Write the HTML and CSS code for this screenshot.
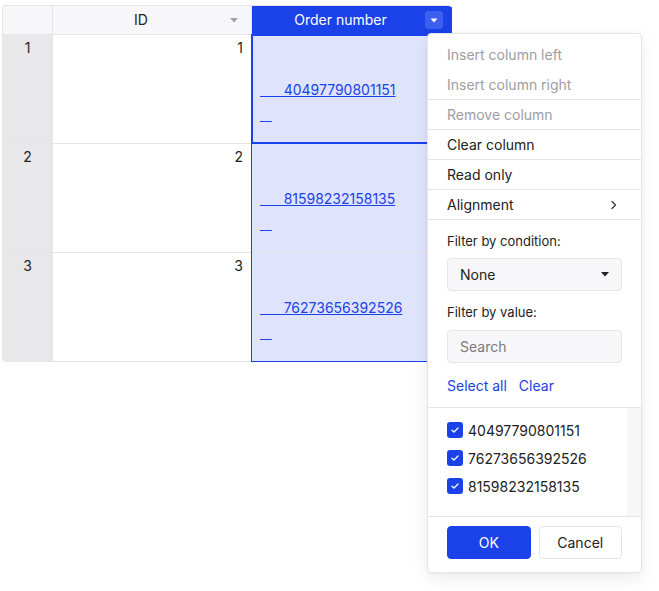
FILE: index.html
```html
<!DOCTYPE html>
<html>
<head>
<meta charset="utf-8">
<link rel="stylesheet" href="styles.css">
</head>
<body>
<div class="grid">
  <div class="cell corner"></div>
  <div class="cell colhead">
    <span class="label">ID</span>
    <span class="dd"><svg width="8" height="5" viewBox="0 0 8 5"><path d="M0 0h8L4 4.5z" fill="#a0a1a7"/></svg></span>
  </div>
  <div class="cell colhead sel">
    <span class="label">Order number</span>
    <span class="dd active"><svg width="8" height="5" viewBox="0 0 8 5"><path d="M0.5 0.5h7L4 4.5z" fill="#fff"/></svg></span>
  </div>

  <div class="cell rowhead">1</div>
  <div class="cell num">1</div>
  <div class="cell ord"><a class="lnk" href="#">
      40497790801151
   </a></div>

  <div class="cell rowhead">2</div>
  <div class="cell num">2</div>
  <div class="cell ord"><a class="lnk" href="#">
      81598232158135
   </a></div>

  <div class="cell rowhead">3</div>
  <div class="cell num">3</div>
  <div class="cell ord"><a class="lnk" href="#">
      76273656392526
   </a></div>

  <div class="area"></div>
  <div class="current"></div>
</div>

<div class="menu">
  <ul class="items">
    <li class="item disabled">Insert column left</li>
    <li class="item disabled sep">Insert column right</li>
    <li class="item disabled sep">Remove column</li>
    <li class="item sep">Clear column</li>
    <li class="item sep">Read only</li>
    <li class="item sep sub">Alignment<svg width="6" height="10" viewBox="0 0 6 10"><path d="M1 1.5l3.5 3.5L1 8.5" fill="none" stroke="#333" stroke-width="1.2" stroke-linecap="round" stroke-linejoin="round"/></svg></li>
  </ul>
  <div class="filters">
    <div class="flabel">Filter by condition:</div>
    <div class="select"><span>None</span><svg width="8" height="5" viewBox="0 0 8 5"><path d="M0 0h8L4 4.5z" fill="#222"/></svg></div>
    <div class="flabel second">Filter by value:</div>
    <div class="search">Search</div>
    <div class="links"><span class="link">Select all</span><span class="link">Clear</span></div>
  </div>
  <div class="list">
    <div class="values">
      <div class="val"><span class="cb"><svg width="8" height="6" viewBox="0 0 8 6"><path d="M1 3.2l2 1.8L7 1" fill="none" stroke="#fff" stroke-width="1.3" stroke-linecap="round" stroke-linejoin="round"/></svg></span>40497790801151</div>
      <div class="val"><span class="cb"><svg width="8" height="6" viewBox="0 0 8 6"><path d="M1 3.2l2 1.8L7 1" fill="none" stroke="#fff" stroke-width="1.3" stroke-linecap="round" stroke-linejoin="round"/></svg></span>76273656392526</div>
      <div class="val"><span class="cb"><svg width="8" height="6" viewBox="0 0 8 6"><path d="M1 3.2l2 1.8L7 1" fill="none" stroke="#fff" stroke-width="1.3" stroke-linecap="round" stroke-linejoin="round"/></svg></span>81598232158135</div>
    </div>
    <div class="track"></div>
  </div>
  <div class="footer">
    <button class="btn ok">OK</button>
    <button class="btn cancel">Cancel</button>
  </div>
</div>
</body>
</html>
```

FILE: styles.css
```css
* { box-sizing: border-box; }
html, body { margin: 0; padding: 0; background: #fff; }
body {
  font-family: Inter, "Noto Sans", "Liberation Sans", sans-serif;
  font-size: 14px;
  color: #222;
  width: 659px;
  height: 591px;
  overflow: hidden;
  position: relative;
}

.grid {
  position: relative;
  margin: 5px 0 0 2px;
  width: 450px;
  display: grid;
  grid-template-columns: 50px 199px 200px;
  grid-template-rows: 29px 109px 109px 109px;
  border-top: 1px solid #e5e5e9;
  border-left: 1px solid #e5e5e9;
  border-radius: 4px;
  overflow: hidden;
}
.cell {
  border-right: 1px solid #e5e5e9;
  border-bottom: 1px solid #e5e5e9;
  background: #fff;
}
.corner, .colhead { background: #f7f7f9; }
.colhead {
  display: flex;
  align-items: center;
  padding: 0 8px;
  gap: 4px;
}
.colhead .label { flex: 1; text-align: center; line-height: 20px; }
.colhead.sel { background: #1a42e8; color: #fff; border-right-color: #1a42e8; border-bottom-color: #1a42e8; }
.dd {
  width: 18px; height: 18px;
  display: flex; align-items: center; justify-content: center;
  border-radius: 3px;
}
.dd.active { background: #3c5ff0; }
.rowhead {
  background: #e8e8eb;
  text-align: center;
  padding-top: 3px;
  line-height: 20px;
}
.num { text-align: right; padding: 3px 8px 0; line-height: 20px; }
.ord {
  background: #dfe4fc;
  display: flex;
  align-items: center;
  padding: 0 8px;
}
.lnk {
  color: #1a42e8;
  white-space: pre;
  line-height: 25px;
  text-decoration: underline;
}
.area {
  position: absolute;
  left: 248px; top: 28px;
  width: 202px; height: 328px;
  border: 1px solid #1a42e8;
  pointer-events: none;
}
.current {
  position: absolute;
  left: 248px; top: 28px;
  width: 202px; height: 110px;
  border: 2px solid #1a42e8;
  pointer-events: none;
}

.menu {
  position: absolute;
  left: 427px; top: 33px;
  width: 215px; height: 540px;
  background: #fff;
  border: 1px solid #e5e5e9;
  border-radius: 4px;
  box-shadow: 0 6px 18px rgba(0,0,0,0.07), 0 1px 4px rgba(0,0,0,0.04);
  display: flex;
  flex-direction: column;
}
.items { list-style: none; margin: 0; padding: 6px 0 0; }
.item {
  height: 30px;
  padding: 0 19px;
  display: flex;
  align-items: center;
  line-height: 20px;
}
.item.sep { border-bottom: 1px solid #e5e5e9; }
.item.disabled { color: #9d9da3; }
.item.sub { justify-content: space-between; padding-right: 24px; }

.filters { padding: 12px 19px 11px; border-bottom: 1px solid #e5e5e9; }
.flabel { font-size: 13px; line-height: 18px; margin-bottom: 8px; }
.flabel.second { margin-top: 12px; margin-bottom: 9px; }
.select, .search {
  height: 33px;
  background: #f7f7f9;
  border: 1px solid #e5e5e9;
  border-radius: 4px;
  display: flex;
  align-items: center;
  padding: 0 12px;
}
.select { justify-content: space-between; padding-right: 12px; }
.search { color: #7a7a80; }
.links { margin-top: 13px; line-height: 20px; display: flex; gap: 12px; }
.link { color: #1a42e8; }

.list { height: 109px; display: flex; border-bottom: 1px solid #e5e5e9; }
.values { flex: 1; padding: 8px 0 0 19px; }
.val { height: 28px; display: flex; align-items: center; gap: 5px; }
.cb {
  width: 16px; height: 16px;
  background: #1a42e8;
  border-radius: 3px;
  display: flex; align-items: center; justify-content: center;
}
.track { width: 14px; background: #f7f7f9; }

.footer {
  padding: 9px 19px 0;
  display: grid;
  grid-template-columns: 1fr 1fr;
  gap: 8px;
}
.btn {
  height: 33px;
  font-family: inherit;
  font-size: 14px;
  border-radius: 4px;
  border: 1px solid #e5e5e9;
  background: #fff;
  color: #222;
  padding: 0;
}
.btn.ok { background: #1a42e8; border-color: #1a42e8; color: #fff; }
```
